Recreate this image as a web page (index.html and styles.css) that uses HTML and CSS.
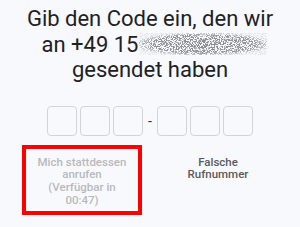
FILE: index.html
```html
<!DOCTYPE html>
<html lang="de">
<head>
    <meta charset="UTF-8">
    <meta name="viewport" content="width=device-width, initial-scale=1.0">
    <title>Code eingeben</title>
    <link rel="stylesheet" href="styles.css">
</head>
<body>
    <div class="screen">
        <h1 class="title">
            Gib den Code ein, den wir<br>
            an +49 15<svg class="redact" width="128" height="22" viewBox="0 0 128 22" aria-hidden="true">
                <defs>
                    <filter id="noise" x="0" y="0" width="100%" height="100%">
                        <feTurbulence type="fractalNoise" baseFrequency="1.3" numOctaves="2" seed="7"/>
                        <feColorMatrix type="matrix" values="0 0 0 0 0.25  0 0 0 0 0.25  0 0 0 0 0.27  9 0 0 0 -4.0"/>
                    </filter>
                    <radialGradient id="fade" cx="0.5" cy="0.5" r="0.55">
                        <stop offset="0" stop-color="#fff"/>
                        <stop offset="0.75" stop-color="#fff" stop-opacity="0.9"/>
                        <stop offset="1" stop-color="#fff" stop-opacity="0.15"/>
                    </radialGradient>
                    <mask id="m">
                        <rect width="128" height="22" fill="url(#fade)"/>
                    </mask>
                </defs>
                <rect width="128" height="22" filter="url(#noise)" mask="url(#m)"/>
            </svg><br>
            gesendet haben
        </h1>

        <div class="code-boxes">
            <div class="digit"></div>
            <div class="digit"></div>
            <div class="digit"></div>
            <span class="dash">-</span>
            <div class="digit"></div>
            <div class="digit"></div>
            <div class="digit"></div>
        </div>

        <div class="actions">
            <div class="action disabled marked">Mich stattdessen anrufen (Verfügbar in 00:47)</div>
            <div class="action">Falsche Rufnummer</div>
        </div>
    </div>
</body>
</html>
```

FILE: styles.css
```css
body {
    margin: 0;
    padding: 0;
    background-color: #f8f9fc;
    font-family: 'Roboto', 'Noto Sans', sans-serif;
    color: #202124;
}

.screen {
    padding-top: 6px;
}

.title {
    margin: 0;
    font-size: 22px;
    font-weight: 400;
    line-height: 25.5px;
    text-align: center;
}

.redact {
    vertical-align: -3px;
    margin-left: 1px;
    margin-right: -9px;
}

/* Code input */
.code-boxes {
    display: flex;
    justify-content: center;
    align-items: center;
    gap: 3px;
    margin-top: 23px;
}

.digit {
    width: 28px;
    height: 28px;
    border: 1px solid #d4d4d8;
    border-radius: 4px;
}

.dash {
    width: 8px;
    text-align: center;
    font-size: 14px;
    color: #333;
}

/* Buttons */
.actions {
    display: grid;
    grid-template-columns: 1fr 1fr;
    gap: 16px;
    padding: 0 22px;
    margin-top: 9px;
    align-items: start;
}

.action {
    border: 4px solid transparent;
    padding: 7px 8px 4px;
    font-size: 11.5px;
    font-weight: 500;
    line-height: 12.8px;
    text-align: center;
    color: #5a5a5e;
}

.action.disabled {
    color: #b9b9bd;
}

.action.marked {
    border-color: #ff0000;
}
```
